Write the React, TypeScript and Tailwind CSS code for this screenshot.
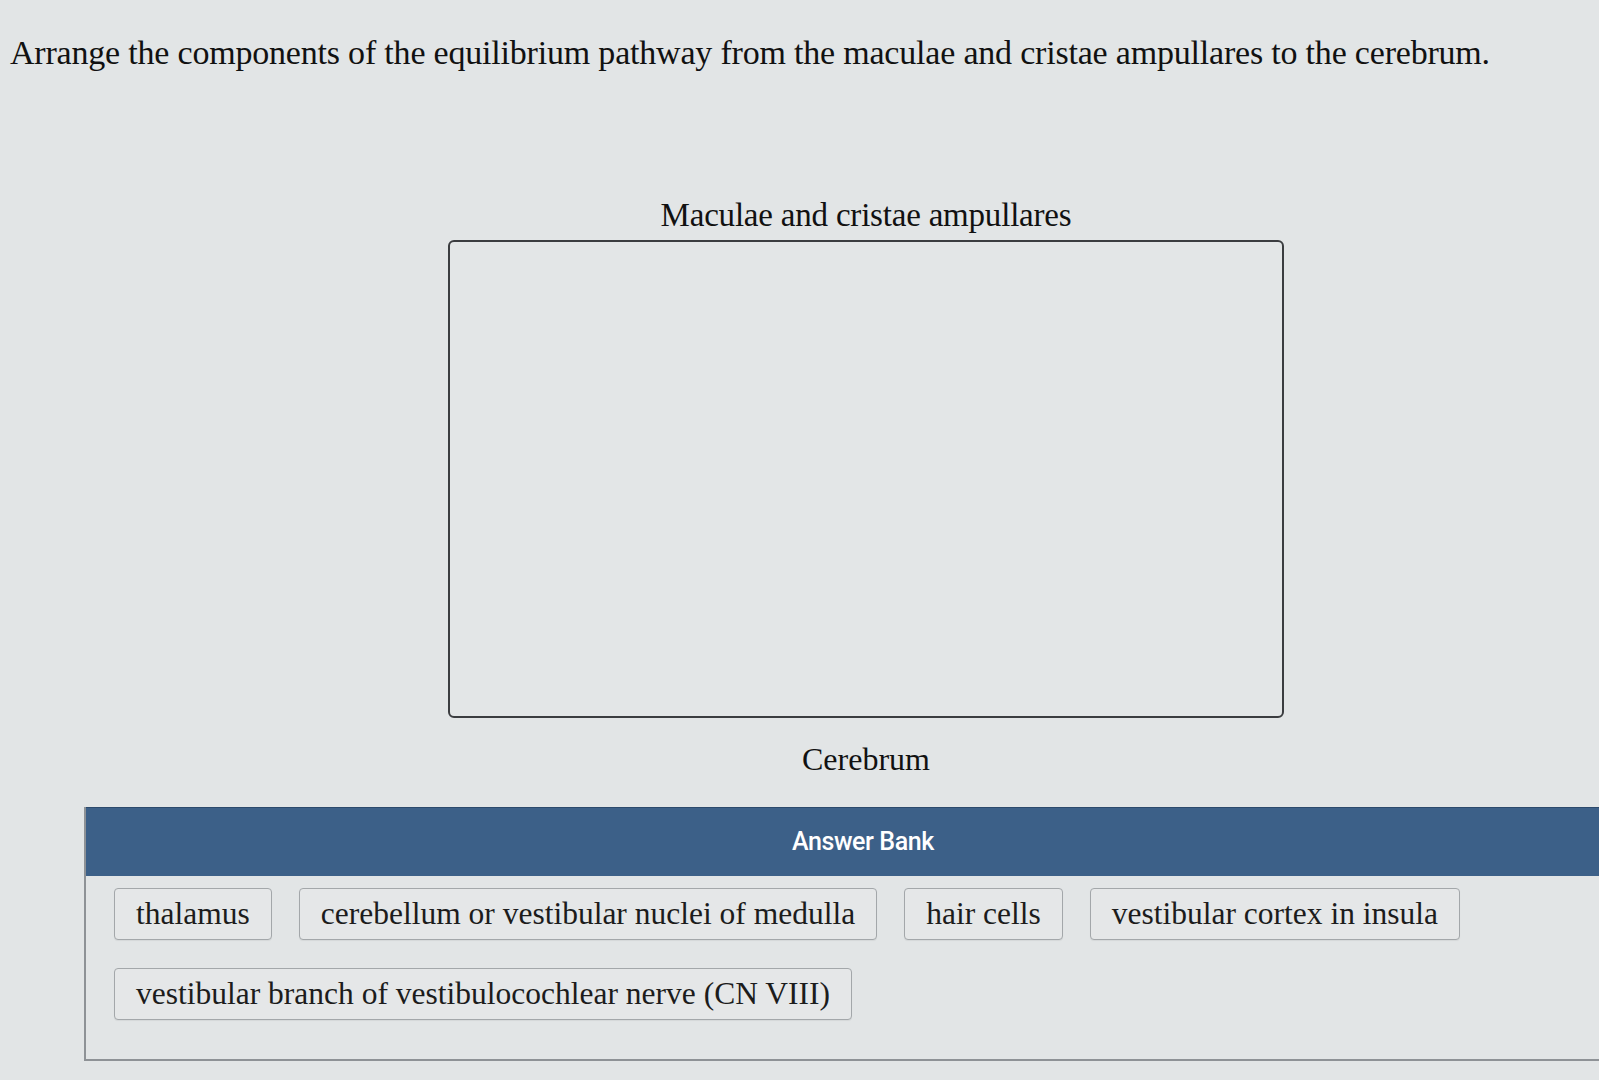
const SERIF = "font-['Liberation_Serif','Times_New_Roman',serif]"

const answers = [
    "thalamus",
    "cerebellum or vestibular nuclei of medulla",
    "hair cells",
    "vestibular cortex in insula",
    "vestibular branch of vestibulocochlear nerve (CN VIII)",
]

function AnswerChip({ label }: { label: string }) {
    return (
        <div className="h-[52px] px-[21px] flex items-center rounded-[4px] border border-[#a3a7aa] bg-[#e5e7e8] text-[31.5px] text-[#1c1c1c] leading-none shadow-[0_1px_1px_rgba(0,0,0,0.06)] cursor-grab">
            {label}
        </div>
    )
}

export default function App() {
    return (
        <div className={`min-h-[1080px] w-full overflow-hidden bg-[#e2e5e6] text-[#111] ${SERIF}`}>
            {/* Question prompt */}
            <h1 className="pl-[10px] pt-[32px] text-[34px] leading-[42px] font-normal tracking-[-0.2px] whitespace-nowrap">
                Arrange the components of the equilibrium pathway from the maculae and cristae ampullares to the cerebrum.
            </h1>

            {/* Ordering target */}
            <div className="ml-[448px] w-[836px] flex flex-col items-center">
                <div className="mt-[120px] text-[33px] leading-[42px] tracking-[-0.2px]">Maculae and cristae ampullares</div>
                <div className="mt-[4px] w-full h-[478px] rounded-[6px] border-2 border-[#3b3d40] bg-[#e3e6e7]" />
                <div className="mt-[20px] text-[32px] leading-[42px]">Cerebrum</div>
            </div>

            {/* Answer bank */}
            <div className="mt-[27px] ml-[84px] border-l-2 border-b-2 border-[#8e9296]">
                <div className="h-[69px] flex items-center bg-[#3c6088] border-t border-[#2c4a6c]">
                    <span className="ml-[697px] w-[160px] text-center font-['Roboto',sans-serif] font-medium text-[25px] tracking-[-0.4px] text-white">
                        Answer Bank
                    </span>
                </div>
                <div className="pl-[28px] pt-[12px] pb-[39px] pr-[120px] flex flex-wrap gap-x-[27px] gap-y-[28px]">
                    {answers.map((a) => (
                        <AnswerChip key={a} label={a} />
                    ))}
                </div>
            </div>
        </div>
    )
}
